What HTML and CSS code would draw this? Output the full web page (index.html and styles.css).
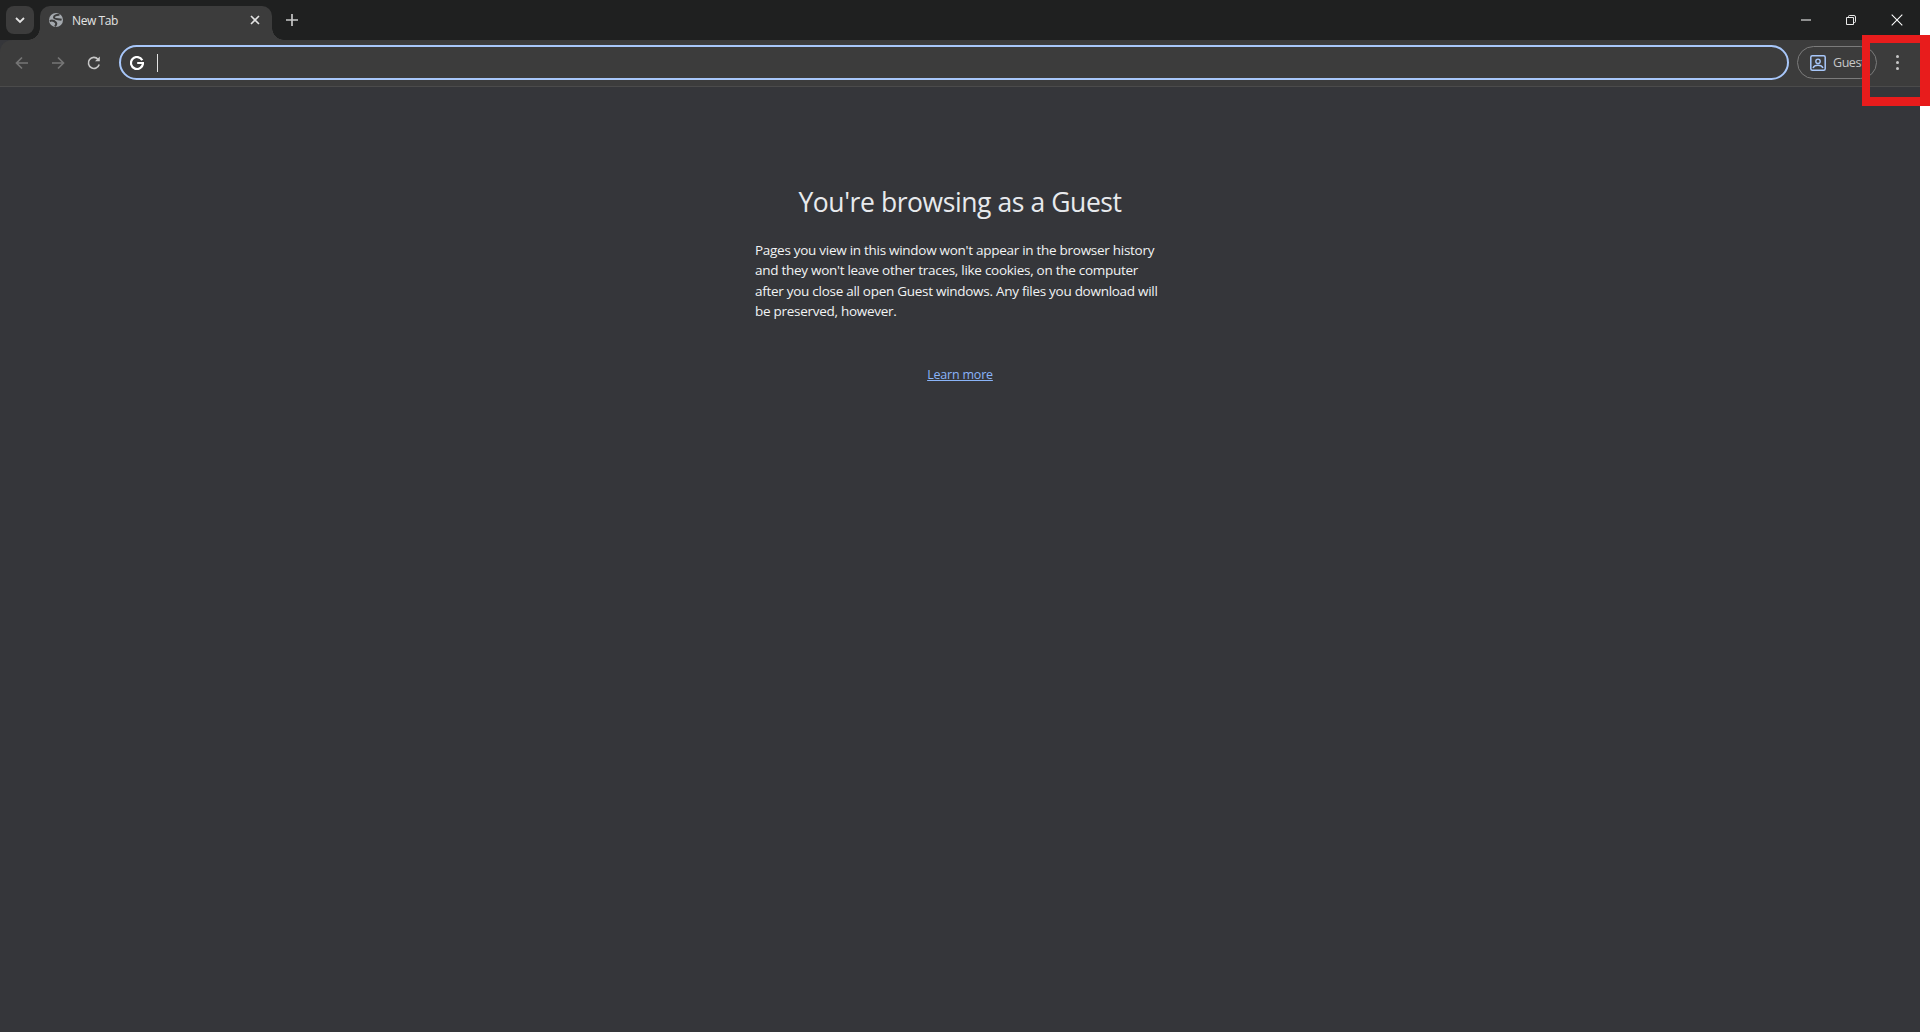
FILE: index.html
```html
<!DOCTYPE html>
<html lang="en">
<head>
  <meta charset="UTF-8">
  <title>New Tab</title>
  <link rel="stylesheet" href="styles.css">
</head>
<body>
  <div class="window">
    <header class="tabstrip">
      <button class="tab-search" aria-label="Search tabs">
        <svg width="12" height="12" viewBox="0 0 12 12"><path d="M2 4l4 4 4-4" fill="none" stroke="#e3e3e3" stroke-width="1.8"/></svg>
      </button>
      <div class="tab">
        <svg class="tab-favicon" width="16" height="16" viewBox="0 0 16 16">
          <circle cx="8" cy="8" r="7" fill="#a4a9ae"/>
          <path d="M11.500 2.800C8.500 2.600 5.800 3.600 6 5.500c.2 2 4.500 1.300 7.600 2.300" fill="none" stroke="#3c3c3c" stroke-width="2"/>
          <path d="M1.800 9c2.200-.8 4.800.2 6 1.500 1 1.200.2 2.700-.8 3.800" fill="none" stroke="#3c3c3c" stroke-width="2"/>
        </svg>
        <span class="tab-title">New Tab</span>
        <svg class="tab-close" width="10" height="10" viewBox="0 0 10 10"><path d="M1 1l8 8M9 1l-8 8" stroke="#e3e3e3" stroke-width="1.600"/></svg>
      </div>
      <button class="new-tab" aria-label="New tab">
        <svg width="14" height="14" viewBox="0 0 14 14"><path d="M7 1v12M1 7h12" stroke="#c7c7c7" stroke-width="1.700"/></svg>
      </button>
      <div class="caption-buttons">
        <svg width="10" height="10" viewBox="0 0 10 10"><path d="M0 5h10" stroke="#fff"/></svg>
        <svg width="10" height="10" viewBox="0 0 10 10"><path d="M.5 2.500h7v7h-7z M2.500 2.500V1.500q0-1 1-1h4.500q1.500 0 1.500 1.500v4.500q0 1-1 1h-1" fill="none" stroke="#fff" stroke-width=".9"/></svg>
        <svg width="12" height="12" viewBox="0 0 12 12"><path d="M.7.700l10.600 10.600M11.300.700L.7 11.300" stroke="#fff" stroke-width="1.050"/></svg>
      </div>
    </header>

    <nav class="toolbar">
      <div class="nav-buttons">
        <svg width="16" height="16" viewBox="0 0 16 16"><path d="M14 8H3M8 2.500L2.500 8 8 13.500" fill="none" stroke="#757575" stroke-width="1.700"/></svg>
        <svg width="16" height="16" viewBox="0 0 16 16"><path d="M2 8h11M8 2.500L13.500 8 8 13.500" fill="none" stroke="#757575" stroke-width="1.700"/></svg>
        <svg width="16" height="16" viewBox="0 0 16 16"><path d="M13.200 9.500A5.500 5.500 0 1 1 12 4.200" fill="none" stroke="#c7c7c7" stroke-width="1.600"/><path d="M13.800 1.500v4.800H9z" fill="#c7c7c7"/></svg>
      </div>
      <div class="omnibox">
        <svg class="g-logo" width="14" height="14" viewBox="0 0 14 14"><path d="M12.300 4.200A6 6 0 1 0 13 7H7.200" fill="none" stroke="#fff" stroke-width="2.200"/></svg>
        <span class="caret"></span>
      </div>
      <div class="profile-chip">
        <svg width="16" height="16" viewBox="0 0 16 16">
          <rect x=".8" y=".8" width="14.400" height="14.400" rx="1.500" fill="none" stroke="#a8c7fa" stroke-width="1.500"/>
          <circle cx="8" cy="6.300" r="2.200" fill="none" stroke="#a8c7fa" stroke-width="1.400"/>
          <path d="M3 13c.8-2 2.700-2.800 5-2.800s4.200.8 5 2.800" fill="none" stroke="#a8c7fa" stroke-width="1.400"/>
        </svg>
        <span class="profile-name">Guest</span>
      </div>
      <div class="menu-button">
        <span></span><span></span><span></span>
      </div>
    </nav>

    <main class="guest-page">
      <h1 class="guest-title">You're browsing as a Guest</h1>
      <p class="guest-text">Pages you view in this window won't appear in the browser history<br>and they won't leave other traces, like cookies, on the computer<br>after you close all open Guest windows. Any files you download will<br>be preserved, however.</p>
      <a class="guest-link" href="#">Learn more</a>
    </main>
  </div>
  <div class="highlight-box"></div>
</body>
</html>
```

FILE: styles.css
```css
:root {
  --frame-color: #1f2020;
  --toolbar-color: #3c3c3c;
  --page-color: #35363a;
  --focus-color: #a8c7fa;
}

* {
  box-sizing: border-box;
  margin: 0;
  padding: 0;
}

html, body {
  height: 100%;
  background-color: #fff;
  overflow: hidden;
}

body {
  font-family: "Open Sans", "Noto Sans", sans-serif;
  color: #e3e3e3;
}

button {
  border: none;
  background: none;
  display: flex;
  align-items: center;
  justify-content: center;
}

.window {
  width: 1920px;
  height: 100%;
  display: flex;
  flex-direction: column;
  background-color: var(--page-color);
}

/* tab strip */
.tabstrip {
  height: 40px;
  flex-shrink: 0;
  display: flex;
  align-items: flex-end;
  padding-left: 6px;
  background-color: var(--frame-color);
}

.tab-search {
  width: 28px;
  height: 28px;
  margin-bottom: 6px;
  border-radius: 8px;
  background-color: var(--toolbar-color);
}

.tab {
  position: relative;
  width: 232px;
  height: 34px;
  margin-left: 6px;
  display: flex;
  align-items: center;
  padding: 0 12px 6px 8px;
  border-radius: 10px 10px 0 0;
  background-color: var(--toolbar-color);
}

.tab::before,
.tab::after {
  content: '';
  position: absolute;
  bottom: 0;
  width: 12px;
  height: 12px;
}

.tab::before {
  left: -12px;
  background: radial-gradient(circle at 0 0, transparent 11.500px, var(--toolbar-color) 12px);
}

.tab::after {
  right: -12px;
  background: radial-gradient(circle at 100% 0, transparent 11.500px, var(--toolbar-color) 12px);
}

.tab-title {
  margin-left: 8px;
  font-size: 12px;
  color: #e3e3e3;
  letter-spacing: -0.4px;
  flex: 1;
}

.new-tab {
  width: 28px;
  height: 28px;
  margin: 0 0 6px 6px;
}

.caption-buttons {
  margin-left: auto;
  height: 40px;
  display: flex;
  align-items: center;
  gap: 35px;
  padding-right: 17px;
}

/* toolbar */
.toolbar {
  height: 47px;
  flex-shrink: 0;
  display: flex;
  align-items: center;
  padding-bottom: 1px;
  border-bottom: 1px solid #4b4b4b;
  border-radius: 12px 0 0 0;
  background-color: var(--toolbar-color);
}

.nav-buttons {
  width: 119px;
  display: flex;
  gap: 20px;
  padding-left: 14px;
}

.omnibox {
  width: 1670px;
  height: 35px;
  display: flex;
  align-items: center;
  padding-left: 9px;
  border: 2px solid var(--focus-color);
  border-radius: 18px;
}

.g-logo {
  flex-shrink: 0;
}

.caret {
  width: 1px;
  height: 18px;
  margin-left: 13px;
  background-color: #e3e3e3;
}

.profile-chip {
  width: 80px;
  height: 33px;
  margin-left: 8px;
  flex-shrink: 0;
  display: flex;
  align-items: center;
  padding-left: 12px;
  border: 1px solid #7b7b7b;
  border-radius: 17px;
}

.profile-name {
  margin-left: 7px;
  font-size: 12.500px;
  letter-spacing: -0.45px;
  color: #c7c7c7;
}

.menu-button {
  flex: 1;
  display: flex;
  flex-direction: column;
  align-items: center;
  gap: 2.500px;
  padding-right: 2px;
}

.menu-button span {
  width: 3.500px;
  height: 3.500px;
  border-radius: 50%;
  background-color: #c7c7c7;
}

/* guest page content */
.guest-page {
  flex: 1;
  display: flex;
  flex-direction: column;
  align-items: center;
  padding-top: 97px;
}

.guest-title {
  font-size: 26.500px;
  font-weight: 400;
  line-height: 36px;
  letter-spacing: -0.42px;
  color: #e8eaed;
  white-space: nowrap;
}

.guest-text {
  width: 410px;
  margin-top: 20px;
  font-size: 13.500px;
  line-height: 20.400px;
  letter-spacing: -0.28px;
  color: #f1f3f4;
  white-space: nowrap;
}

.guest-link {
  margin-top: 44px;
  font-size: 12.500px;
  line-height: 18px;
  letter-spacing: -0.2px;
  color: #8ab4f8;
}

/* red annotation drawn over the screenshot */
.highlight-box {
  position: absolute;
  left: 1862px;
  top: 35px;
  width: 68px;
  height: 71px;
  border: solid #e81c1c;
  border-width: 8px 10px 9px 8px;
}
```
